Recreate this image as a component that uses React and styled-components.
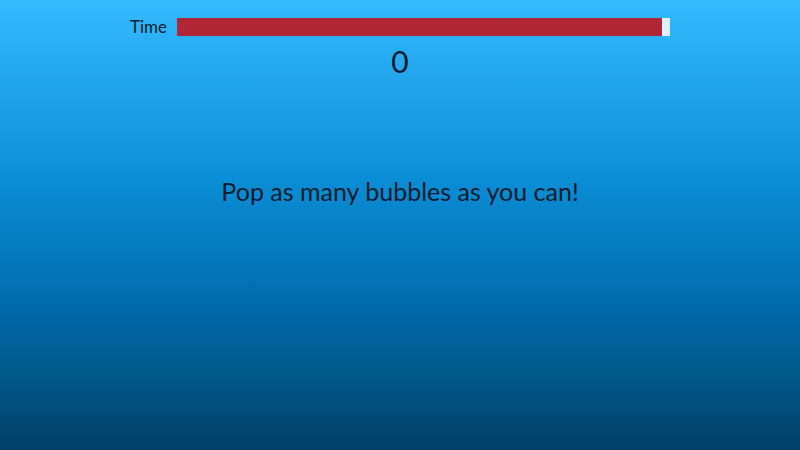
import React from 'react'
import styled, { createGlobalStyle } from 'styled-components'

const GlobalStyle = createGlobalStyle`
  html, body {
    margin: 0;
    padding: 0;
  }
  body {
    font-family: Lato, "Liberation Sans", sans-serif;
    color: #0b1a2b;
  }
`

function TimeBar({ left }) {
  return (
    <TimeRow>
      <TimeLabel>Time</TimeLabel>
      <Track>
        <Fill style={{ width: `${left * 100}%` }} />
      </Track>
    </TimeRow>
  )
}

export default function App() {
  return (
    <>
      <GlobalStyle />
      <Screen>
        <Hud>
          <TimeBar left={0.984} />
          <Score>0</Score>
        </Hud>
        <Message>Pop as many bubbles as you can!</Message>
      </Screen>
    </>
  )
}

const Screen = styled.div`
  width: 100vw;
  height: 100vh;
  display: flex;
  flex-direction: column;
  align-items: center;
  background: linear-gradient(to bottom, #34baff 0%, #0a8ed6 40%, #0168a6 70%, #004166 100%);
  overflow: hidden;
`

const Hud = styled.div`
  width: 540px;
  padding-top: 18px;
  display: flex;
  flex-direction: column;
  align-items: center;
`

const TimeRow = styled.div`
  width: 100%;
  display: flex;
  align-items: center;
  gap: 10px;
`

const TimeLabel = styled.span`
  font-size: 17px;
  line-height: 18px;
`

const Track = styled.div`
  flex: 1;
  height: 18px;
  background: #dcefff;
  display: flex;
`

const Fill = styled.div`
  height: 100%;
  background: #b02634;
`

const Score = styled.div`
  margin-top: 7px;
  font-size: 30px;
  line-height: 36px;
`

const Message = styled.div`
  margin-top: 97px;
  font-size: 25px;
  line-height: 30px;
`
